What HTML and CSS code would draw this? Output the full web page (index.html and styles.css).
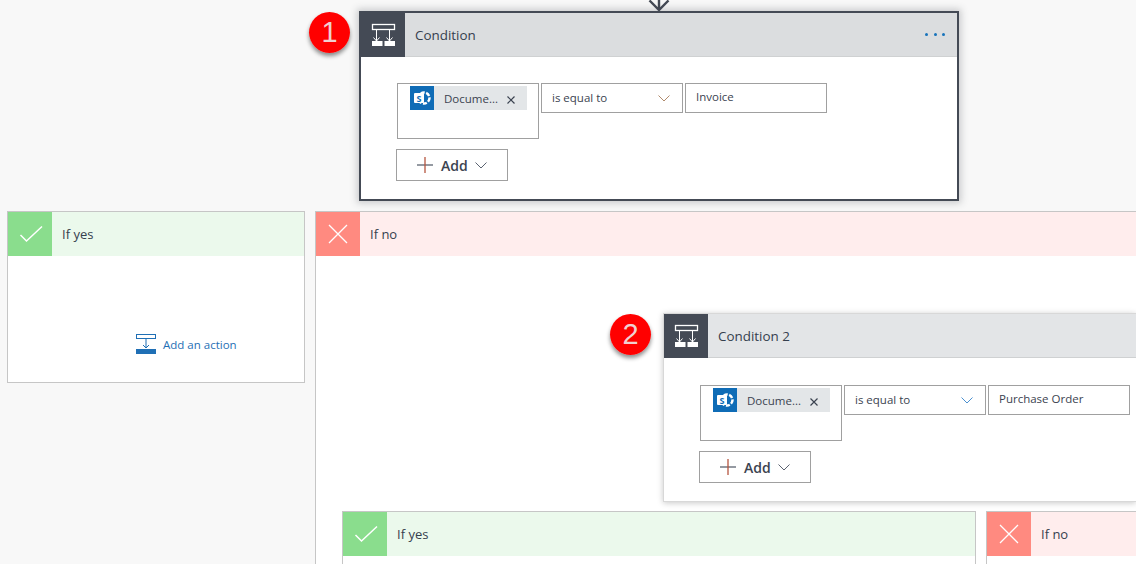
FILE: index.html
```html
<!DOCTYPE html>
<html lang="en">
<head>
<meta charset="utf-8">
<title>Condition flow</title>
<link rel="stylesheet" href="styles.css">
</head>
<body>
<svg class="defs" width="0" height="0" aria-hidden="true">
  <symbol id="i-cond" viewBox="0 0 44 44">
    <rect x="11.5" y="11.5" width="22" height="5" fill="none" stroke="#fff" stroke-width="1.300"/>
    <path d="M15.5 17v11M12.5 24.500l3 3.500 3-3.500M28.500 17v11M25.500 24.500l3 3.500 3-3.500" fill="none" stroke="#fff"/>
    <rect x="11" y="28" width="10.500" height="5" fill="#fff"/>
    <rect x="23.500" y="28" width="10.500" height="5" fill="#fff"/>
  </symbol>
  <symbol id="i-sp" viewBox="0 0 24 24">
    <rect width="24" height="24" fill="#0f6cb6"/>
    <circle cx="14" cy="12" r="5.500" fill="none" stroke="#fff" stroke-width="2.500" stroke-dasharray="4 1.500"/>
    <rect x="4" y="7" width="10" height="10" rx="1" fill="#fff"/>
  </symbol>
  <symbol id="i-check" viewBox="0 0 44 44">
    <path d="M12.500 23l6 6L34 14.500" fill="none" stroke="#fff" stroke-width="1.500"/>
  </symbol>
  <symbol id="i-x" viewBox="0 0 44 44">
    <path d="M13 13l18 18M31 13L13 31" fill="none" stroke="#fff" stroke-width="1.300"/>
  </symbol>
  <symbol id="i-plus" viewBox="0 0 16 16">
    <path d="M0 8h16" stroke="#5c6470" stroke-width="1.300"/>
    <path d="M8 0v16" stroke="#b5553f" stroke-width="1.300"/>
  </symbol>
  <symbol id="i-chev" viewBox="0 0 12 7">
    <path d="M.5.500L6 6 11.500.500" fill="none" stroke="currentColor"/>
  </symbol>
  <symbol id="i-close" viewBox="0 0 8 8">
    <path d="M.500.500l7 7M7.500.500l-7 7" fill="none" stroke="#3b4350" stroke-width="1.200"/>
  </symbol>
</svg>

<main class="canvas">
  <svg class="connector" width="22" height="11" viewBox="0 0 22 11" aria-hidden="true">
    <path d="M11 0v10M1.500 .500L11 10 20.500 .500" fill="none" stroke="#444a55" stroke-width="2.400"/>
  </svg>

  <section class="card card-selected card-first">
    <span class="badge badge-card">1</span>
    <header class="card-head">
      <span class="head-icon"><svg width="44" height="44"><use href="#i-cond"/></svg></span>
      <span class="head-title">Condition</span>
      <span class="dots"><i></i><i></i><i></i></span>
    </header>
    <div class="card-body">
      <div class="fields">
        <div class="token-box">
          <span class="token">
            <svg width="24" height="24" viewBox="0 0 24 24"><use href="#i-sp"/><text x="9" y="15.500" class="sp-s">S</text></svg>
            <span class="token-text">Docume...</span>
            <svg class="token-x" width="8" height="8"><use href="#i-close"/></svg>
          </span>
        </div>
        <div class="select"><span>is equal to</span><svg class="chev chev-warm" width="12" height="7"><use href="#i-chev"/></svg></div>
        <div class="input">Invoice</div>
      </div>
      <div class="add">
        <svg width="16" height="16"><use href="#i-plus"/></svg>
        <span class="add-text">Add</span>
        <svg class="chev chev-dark" width="12" height="7"><use href="#i-chev"/></svg>
      </div>
    </div>
  </section>

  <div class="branches">
    <section class="branch branch-left">
      <header class="branch-head yes">
        <span class="branch-icon"><svg width="44" height="44"><use href="#i-check"/></svg></span>
        <span class="branch-title">If yes</span>
      </header>
      <div class="branch-empty">
        <a class="add-action">
          <svg width="20" height="20" viewBox="0 0 20 20" aria-hidden="true">
            <rect x=".5" y=".5" width="19" height="4" fill="#fff" stroke="#1f6fb5"/>
            <path d="M10 5v9M7 11l3 3 3-3" fill="none" stroke="#1f6fb5"/>
            <rect y="15" width="20" height="5" fill="#1f6fb5"/>
          </svg>
          <span>Add an action</span>
        </a>
      </div>
    </section>

    <section class="branch branch-right">
      <header class="branch-head no">
        <span class="branch-icon"><svg width="44" height="44"><use href="#i-x"/></svg></span>
        <span class="branch-title">If no</span>
      </header>
      <div class="nested">
        <section class="card card-second">
          <span class="badge badge-card">2</span>
          <header class="card-head">
            <span class="head-icon"><svg width="44" height="44"><use href="#i-cond"/></svg></span>
            <span class="head-title">Condition 2</span>
          </header>
          <div class="card-body">
            <div class="fields">
              <div class="token-box">
                <span class="token">
                  <svg width="24" height="24" viewBox="0 0 24 24"><use href="#i-sp"/><text x="9" y="15.500" class="sp-s">S</text></svg>
                  <span class="token-text">Docume...</span>
                  <svg class="token-x" width="8" height="8"><use href="#i-close"/></svg>
                </span>
              </div>
              <div class="select"><span>is equal to</span><svg class="chev chev-blue" width="12" height="7"><use href="#i-chev"/></svg></div>
              <div class="input">Purchase Order</div>
            </div>
            <div class="add">
              <svg width="16" height="16"><use href="#i-plus"/></svg>
              <span class="add-text">Add</span>
              <svg class="chev chev-dark" width="12" height="7"><use href="#i-chev"/></svg>
            </div>
          </div>
        </section>
        <div class="inner-branches">
          <section class="branch inner-yes">
            <header class="branch-head yes">
              <span class="branch-icon"><svg width="44" height="44"><use href="#i-check"/></svg></span>
              <span class="branch-title">If yes</span>
            </header>
          </section>
          <section class="branch inner-no">
            <header class="branch-head no">
              <span class="branch-icon"><svg width="44" height="44"><use href="#i-x"/></svg></span>
              <span class="branch-title">If no</span>
            </header>
          </section>
        </div>
      </div>
    </section>
  </div>
</main>
</body>
</html>
```
FILE: styles.css
```css
* { box-sizing: border-box; }
html, body { margin: 0; height: 100%; }
body {
  width: 1136px;
  height: 564px;
  overflow: hidden;
  background: #f8f8f8;
  font-family: "Open Sans", "Noto Sans", "Liberation Sans", sans-serif;
  font-size: 12px;
  color: #3b4350;
}
svg { display: block; flex: none; }
.defs { position: absolute; }
.sp-s { font: 700 9px "Open Sans", sans-serif; fill: #0f6cb6; text-anchor: middle; }

.canvas { display: flex; flex-direction: column; width: 1136px; }
.connector { margin-left: 648px; height: 11px; }

.card { position: relative; flex: none; width: 600px; background: #fff; }
.card-first { margin-left: 359px; height: 190px; border: 2px solid #444a55; box-shadow: 0 0 7px 2px rgba(60, 64, 72, .25); }
.card-second { width: 473px; height: 189px; margin-left: 347px; border: 1px solid #d8d8d8; border-right: 0; box-shadow: 0 1px 6px rgba(0, 0, 0, .22); }

.badge {
  position: absolute;
  width: 41px;
  height: 41px;
  border-radius: 50%;
  background: radial-gradient(circle at 50% 45%, #ff0000 70%, #e80000 100%);
  box-shadow: 0 3px 4px rgba(0, 0, 0, .45);
  color: #f0d0d0;
  font: 400 29px/41px "Liberation Sans", sans-serif;
  text-align: center;
}
.card-first .badge { left: -52px; top: -1px; }
.card-second .badge { left: -54px; top: 0; }

.card-head { display: flex; align-items: center; height: 44px; background: #dbdddf; border-bottom: 1px solid #cfd1d2; }
.card-second .card-head { background: #e3e5e7; }
.head-icon { width: 44px; height: 44px; flex: none; background: #444a55; }
.head-title { margin-left: 10px; font-size: 13.400px; color: #35404e; }
.dots { display: flex; gap: 5.500px; margin-left: auto; margin-right: 12px; }
.dots i { width: 3px; height: 3px; background: #1773bb; border-radius: 50%; }

.card-body { display: flex; flex-direction: column; align-items: flex-start; padding: 26px 0 0 36px; }
.card-second .card-body { padding-top: 27px; }
.fields { display: flex; gap: 2px; align-items: flex-start; }
.token-box { width: 142px; height: 56px; border: 1px solid #a0a0a0; padding: 2px 0 0 12px; }
.token { display: flex; align-items: center; width: 117px; height: 24px; background: #e3e6e8; }
.token-text { margin-left: 10px; width: 59px; white-space: nowrap; font-size: 11.500px; }
.token-x { margin-left: 4px; margin-top: 3px; }
.select, .input { width: 142px; height: 30px; border: 1px solid #a0a0a0; background: #fff; display: flex; align-items: center; flex: none; }
.select { padding: 0 12px 2px 10px; justify-content: space-between; font-size: 11.500px; }
.input { padding: 0 10px 3px; font-size: 11.500px; }
.chev { margin-top: 3px; }
.chev-warm { color: #b08a6c; }
.chev-blue { color: #4a90d0; }
.chev-dark { color: #5a6270; margin: 0; }

.add {
  display: flex;
  align-items: center;
  width: 112px;
  height: 32px;
  margin: 10px 0 0 -1px;
  padding-left: 20px;
  border: 1px solid #a0a0a0;
  background: #fff;
}
.add-text { margin: 0 7px 0 8px; font-size: 14px; font-weight: 600; color: #3b4350; }

.branches { display: flex; gap: 10px; margin-top: 10px; margin-left: 7px; }
.branch { border: 1px solid #c6c6c6; background: #fff; flex: none; }
.branch-left { width: 298px; height: 172px; }
.branch-right { width: 821px; height: 353px; border-right: 0; border-bottom: 0; }
.branch-head { display: flex; align-items: center; height: 44px; }
.branch-head.yes { background: #ebf9ec; }
.branch-head.no { background: #ffeded; }
.branch-icon { width: 44px; height: 44px; flex: none; }
.yes .branch-icon { background: #8add8d; }
.no .branch-icon { background: #ff8a80; }
.branch-title { margin-left: 10px; font-size: 13px; color: #35404e; }

.branch-empty { display: flex; padding: 78px 0 0 128px; }
.add-action { display: flex; align-items: center; gap: 7px; color: #1f6fb5; font-size: 11.500px; }

.nested { padding-top: 57px; display: flex; flex-direction: column; height: 308px; }
.inner-branches { display: flex; flex: none; gap: 10px; margin: 9px 0 0 26px; }
.inner-yes { width: 634px; height: 53px; border-bottom: 0; }
.inner-no { width: 150px; height: 53px; border-right: 0; border-bottom: 0; }
```
